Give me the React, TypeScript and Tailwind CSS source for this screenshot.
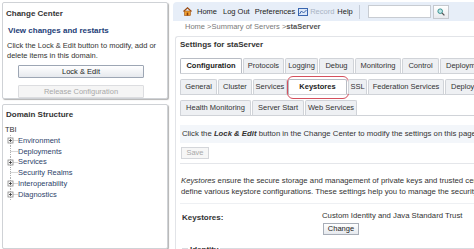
import React from "react";

function HomeIcon() {
  return (
    <svg width="9" height="9" viewBox="0 0 9 9">
      <path d="M0.5 4.5 L4.5 0.8 L8.5 4.5" fill="none" stroke="#9a4a10" strokeWidth="1.2" />
      <rect x="1.6" y="4" width="5.8" height="4.5" fill="#f0a030" stroke="#a05010" strokeWidth="0.6" />
      <rect x="3.7" y="5.6" width="1.6" height="2.9" fill="#8a3a08" />
    </svg>
  );
}

function RecordIcon() {
  return (
    <svg width="10" height="8" viewBox="0 0 10 8">
      <rect x="0.5" y="0.5" width="9" height="7" fill="#dde8f8" stroke="#3a66b0" strokeWidth="1" />
      <path d="M1.5 6 L3.5 3 L5.5 5 L8.5 2" fill="none" stroke="#2a56a0" strokeWidth="0.9" />
    </svg>
  );
}

function SearchIcon() {
  return (
    <svg width="8" height="8" viewBox="0 0 8 8">
      <circle cx="3.2" cy="3.2" r="2.3" fill="#bfe6e6" stroke="#2a8a8a" strokeWidth="0.9" />
      <path d="M4.9 4.9 L7.4 7.4" stroke="#555" strokeWidth="1.3" />
    </svg>
  );
}

function TreeGlyph({ plus }: { plus: boolean }) {
  return (
    <svg width="16" height="11" viewBox="0 0 16 11" className="shrink-0">
      <path d="M7.5 0 V11" stroke="#9a9a9a" strokeWidth="0.8" strokeDasharray="1 1" />
      <path d="M7.5 5.5 H15" stroke="#9a9a9a" strokeWidth="0.8" strokeDasharray="1 1" />
      {plus && (
        <>
          <rect x="5" y="3" width="5" height="5" fill="#fff" stroke="#888" strokeWidth="0.8" />
          <path d="M6 5.5 H9 M7.5 4 V7" stroke="#333" strokeWidth="0.8" />
        </>
      )}
    </svg>
  );
}

function Tab({ label, w, active, hl }: { label: string; w?: number; active?: boolean; hl?: boolean }) {
  return (
    <div
      className={
        "relative h-[15px] flex items-center justify-center shrink-0 border border-b-0 rounded-t-[2px] " +
        (active
          ? "bg-white border-[#b8bcc4] font-bold text-[#222]"
          : "bg-[#eef0f3] border-[#d0d3d8] text-[#333]")
      }
      style={w ? { width: w } : { flex: 1, justifyContent: "flex-start", paddingLeft: 5 }}
    >
      <span className="whitespace-nowrap">{label}</span>
      {hl && (
        <span className="absolute -left-[2px] -right-[3px] -top-[4px] -bottom-[5px] border border-[#d4505e] rounded-[6px]" />
      )}
    </div>
  );
}

export default function App() {
  const tree = [
    { label: "Environment", plus: true },
    { label: "Deployments", plus: false },
    { label: "Services", plus: true },
    { label: "Security Realms", plus: false },
    { label: "Interoperability", plus: true },
    { label: "Diagnostics", plus: true },
  ];
  return (
    <div className="w-[474px] h-[249px] overflow-hidden bg-white flex font-['Liberation_Sans',Arial,sans-serif] text-[7.5px] text-[#333]">
      {/* Left column */}
      <div className="w-[173px] shrink-0 pl-[2px] pt-[2px] flex flex-col">
        <div className="w-[166px] h-[99px] border border-[#cfd2d6] rounded-[2px] shadow-[1px_1px_1px_rgba(0,0,0,0.3)] bg-white flex flex-col">
          <div className="h-[21px] flex items-center pl-[3px] font-bold text-[8px] text-[#333]">Change Center</div>
          <div className="h-[14px] flex items-center pl-[5px] font-bold text-[8px] text-[#1d3d78]">View changes and restarts</div>
          <div className="pt-[3px] pl-[4px] leading-[10px] text-[#333]">
            <div>Click the Lock &amp; Edit button to modify, add or</div>
            <div>delete items in this domain.</div>
          </div>
          <div className="mt-[4px] ml-[15px] w-[126px] h-[13px] border border-[#9da6b4] rounded-[1px] bg-[linear-gradient(#ffffff,#e6e9ee)] flex items-center justify-center text-[#222]">
            Lock &amp; Edit
          </div>
          <div className="mt-[7px] ml-[15px] w-[126px] h-[13px] border border-[#dcdde0] rounded-[1px] bg-[#f5f5f5] flex items-center justify-center text-[#a8a8a8]">
            Release Configuration
          </div>
        </div>
        <div className="mt-[5px] w-[166px] h-[160px] border border-[#cfd2d6] rounded-[2px] shadow-[1px_1px_1px_rgba(0,0,0,0.3)] bg-white flex flex-col">
          <div className="h-[19px] flex items-center pl-[3px] font-bold text-[8px] text-[#333]">Domain Structure</div>
          <div className="h-[11px] flex items-center pl-[2px] text-[#333]">TBI</div>
          {tree.map((t) => (
            <div key={t.label} className="h-[10.8px] flex items-center text-[#2d3f6a]">
              <TreeGlyph plus={t.plus} />
              <span className="ml-[-1px]">{t.label}</span>
            </div>
          ))}
        </div>
      </div>

      {/* Right column */}
      <div className="flex-1 min-w-0 flex flex-col">
        <div className="mt-[2px] h-[19px] bg-[#e7eef8] rounded-tl-[4px] flex items-center pl-[10px] text-[#222] whitespace-nowrap">
          <HomeIcon />
          <span className="ml-[5px]">Home</span>
          <span className="ml-[6px]">Log Out</span>
          <span className="ml-[5px]">Preferences</span>
          <span className="ml-[3px]"><RecordIcon /></span>
          <span className="ml-[2px] text-[#a9b4c4]">Record</span>
          <span className="ml-[3px]">Help</span>
          <span className="ml-[6px] w-px h-[14px] bg-[#c4ccd8]" />
          <div className="ml-[8px] w-[63px] h-[13px] border border-[#c8ccd2] bg-white" />
          <div className="ml-[2px] w-[16px] h-[14px] border border-[#c4c8ce] bg-[linear-gradient(#fff,#e8eaee)] flex items-center justify-center">
            <SearchIcon />
          </div>
        </div>
        <div className="h-[12px] flex items-center pl-[12px] text-[#7a7a7a] whitespace-nowrap">
          Home &gt;Summary of Servers &gt;<span className="font-bold text-[#555]">staServer</span>
        </div>
        <div className="mt-[3px] ml-[2px] flex-1 border-l border-t border-[#e2e4e8] rounded-tl-[3px] flex flex-col pl-[4px]">
          <div className="h-[15px] flex items-center font-bold text-[8px] text-[#333] whitespace-nowrap">Settings for staServer</div>
          <div className="mt-[6px] flex flex-col gap-[5px] overflow-hidden">
            <div className="flex gap-[1px] border-b border-[#d0d3d8]">
              <Tab label="Configuration" w={62} active />
              <Tab label="Protocols" w={41} />
              <Tab label="Logging" w={33} />
              <Tab label="Debug" w={35} />
              <Tab label="Monitoring" w={46} />
              <Tab label="Control" w={37} />
              <Tab label="Deployments" />
            </div>
            <div className="flex gap-[1px] border-b border-[#d0d3d8]">
              <Tab label="General" w={37} />
              <Tab label="Cluster" w={34} />
              <Tab label="Services" w={34} />
              <Tab label="Keystores" w={59} active hl />
              <Tab label="SSL" w={19} />
              <Tab label="Federation Services" w={76} />
              <Tab label="Deployment" />
            </div>
            <div className="flex gap-[1px] border-b border-[#d0d3d8]">
              <Tab label="Health Monitoring" w={71} />
              <Tab label="Server Start" w={52} />
              <Tab label="Web Services" w={52} />
            </div>
          </div>
          <div className="mt-[9px] h-[18px] bg-[#f3f6fa] flex items-center pl-[2px] whitespace-nowrap text-[7.75px]">
            Click the&nbsp;<b><i>Lock &amp; Edit</i></b>&nbsp;button in the Change Center to modify the settings on this page.
          </div>
          <div className="mt-[4px] ml-[1px] w-[28px] h-[12px] border border-[#d4d6da] bg-[#f6f6f6] flex items-center justify-center text-[#a8a8a8]">
            Save
          </div>
          <div className="mt-[4px] h-px bg-[#e4e6ea]" />
          <div className="mt-[11px] pl-[1px] leading-[11px] whitespace-nowrap text-[7.75px]">
            <div><i>Keystores</i> ensure the secure storage and management of private keys and trusted certificate authorities (CAs). This page lets you view and</div>
            <div>define various keystore configurations. These settings help you to manage the security of message transmissions.</div>
          </div>
          <div className="mt-[6px] h-px bg-[#eef0f3]" />
          <div className="mt-[6px] flex pl-[2px]">
            <div className="w-[140px] pt-[2px] font-bold text-[8px] text-[#333]">Keystores:</div>
            <div className="flex flex-col">
              <div className="whitespace-nowrap text-[7.75px]">Custom Identity and Java Standard Trust</div>
              <div className="mt-[1px] ml-[1px] w-[36px] h-[12px] border border-[#a8aeb8] bg-[linear-gradient(#fff,#e6e9ee)] flex items-center justify-center text-[#222]">
                Change
              </div>
            </div>
          </div>
          <div className="mt-[13px] ml-[2px] border-t border-[#d8dbe0] relative">
            <span className="absolute left-[6px] -top-[5px] bg-white px-[2px] font-bold text-[8px]">Identity</span>
          </div>
        </div>
      </div>
    </div>
  );
}
